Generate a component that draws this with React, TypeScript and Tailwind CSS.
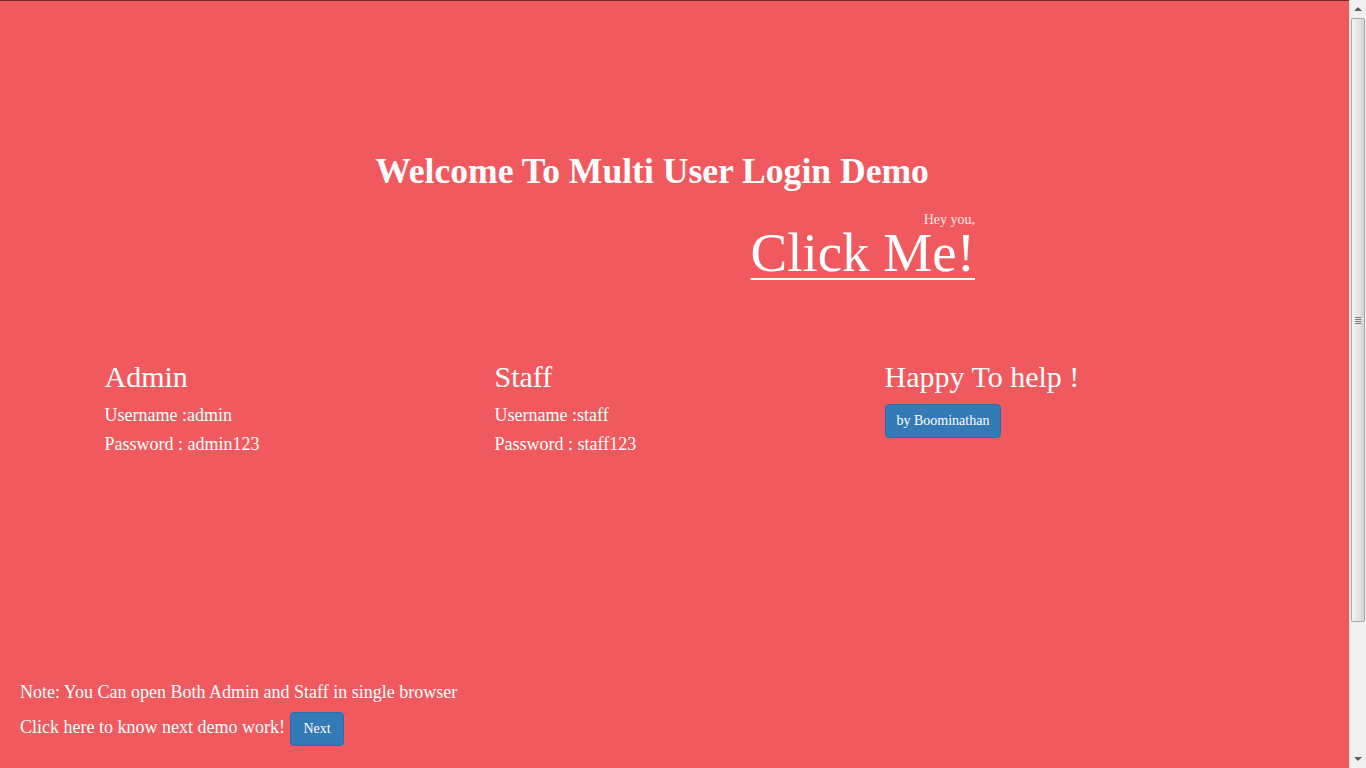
import React from "react";

export default function App() {
  return (
    <div className="flex h-screen w-full overflow-hidden bg-[#f05a5e]">
      <main
        className="flex flex-1 flex-col border-t border-[#6e2a2c] pt-[150px] text-white"
        style={{ fontFamily: '"Liberation Serif", "Times New Roman", serif' }}
      >
        <div className="flex justify-center pr-[45px]">
          <h1 className="text-[35.6px] font-bold leading-[40px]">Welcome To Multi User Login Demo</h1>
        </div>

        <div className="mt-[22px] flex flex-col items-end pr-[374px]">
          <span className="text-[14px] leading-[14px] text-[#fbe9e9]">Hey you,</span>
          <a
            href="#"
            className="text-[55px] leading-[52px] underline decoration-2 underline-offset-[7px]"
          >
            Click Me!
          </a>
        </div>

        <div className="mx-auto mt-[81px] grid w-[1170px] grid-cols-3">
          <div className="px-[15px]">
            <h2 className="text-[30px] leading-[33px]">Admin</h2>
            <p className="mt-[8px] text-[18px] leading-[29px]">Username :admin</p>
            <p className="text-[18px] leading-[29px]">Password : admin123</p>
          </div>
          <div className="px-[15px]">
            <h2 className="text-[30px] leading-[33px]">Staff</h2>
            <p className="mt-[8px] text-[18px] leading-[29px]">Username :staff</p>
            <p className="text-[18px] leading-[29px]">Password : staff123</p>
          </div>
          <div className="px-[15px]">
            <h2 className="text-[30px] leading-[33px]">Happy To help !</h2>
            <button className="mt-[11px] rounded-[4px] border border-[#2e6da4] bg-[#337ab7] px-[11px] py-[6px] text-[14px] leading-[20px] text-white">
              by Boominathan
            </button>
          </div>
        </div>

        <div className="mt-auto px-[20px] pb-[22px]">
          <p className="text-[18px] leading-[29px]">Note: You Can open Both Admin and Staff in single browser</p>
          <div className="mt-[5px] text-[18px] leading-[29px]">
            Click here to know next demo work!{" "}
            <button className="ml-[1px] inline-block rounded-[4px] border border-[#2e6da4] bg-[#337ab7] px-[12px] py-[6px] align-baseline text-[14px] leading-[20px] text-white">
              Next
            </button>
          </div>
        </div>
      </main>

      <div className="flex w-[17px] flex-col items-center border-l border-[#e3e3e3] bg-[#f0f0f0]">
        <div className="flex h-[18px] w-full items-center justify-center">
          <div className="h-0 w-0 border-x-[4px] border-b-[4px] border-x-transparent border-b-[#606060]" />
        </div>
        <div className="flex h-[604px] w-[14px] items-center justify-center rounded-[2px] border border-[#a8a8a8] bg-gradient-to-r from-[#f4f4f4] via-[#e6e6e6] to-[#d4d4d4]">
          <div className="flex flex-col gap-[1px]">
            <div className="h-[1px] w-[6px] bg-[#7a7a7a]" />
            <div className="h-[1px] w-[6px] bg-[#7a7a7a]" />
            <div className="h-[1px] w-[6px] bg-[#7a7a7a]" />
            <div className="h-[1px] w-[6px] bg-[#7a7a7a]" />
          </div>
        </div>
        <div className="flex-1" />
        <div className="flex h-[18px] w-full items-center justify-center">
          <div className="h-0 w-0 border-x-[4px] border-t-[4px] border-x-transparent border-t-[#606060]" />
        </div>
      </div>
    </div>
  );
}
